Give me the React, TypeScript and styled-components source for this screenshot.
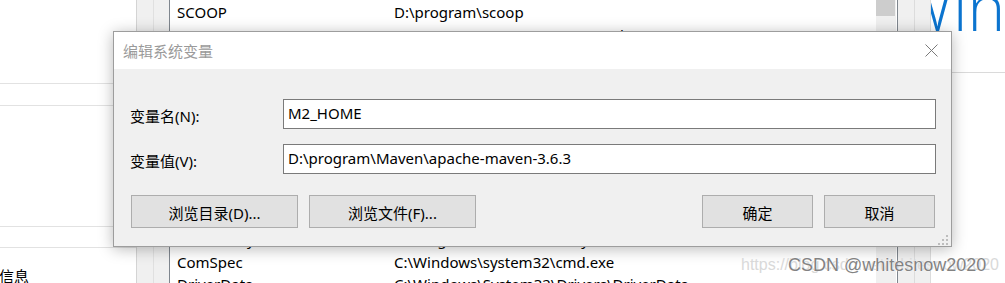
import React from "react";
import styled, { createGlobalStyle } from "styled-components";

const UI_FONT = `"Noto Sans", "Noto Sans CJK SC", sans-serif`;

const Global = createGlobalStyle`
  html, body { margin: 0; padding: 0; background: #fff; }
  body { font-family: ${UI_FONT}; }
  * { box-sizing: border-box; }
`;

const Screen = styled.div`
  position: relative;
  width: 1005px;
  height: 283px;
  overflow: hidden;
  background: #fff;
  display: flex;
  font-family: ${UI_FONT};
  color: #000;
`;

/* ---------- background: left navigation pane ---------- */
const LeftPane = styled.div`
  width: 136px;
  flex: none;
  display: flex;
  flex-direction: column;
  background: #fff;
`;

const NavBlock = styled.div<{ $h: number }>`
  height: ${(p) => p.$h + 1}px;
  flex: none;
  border-bottom: 1px solid #e2e2e2;
`;

const NavText = styled.div`
  padding-top: 18px;
  font-size: 15px;
  line-height: 20px;
  font-family: "Noto Sans CJK SC", sans-serif;
  margin-left: -1px;
`;

/* ---------- background: env-var window frame ---------- */
const Rail = styled.div<{ $w: number; $line: string }>`
  width: ${(p) => p.$w}px;
  flex: none;
  background: #f0f0f0;
  border-left: 1px solid ${(p) => p.$line};
`;

const ListBox = styled.div`
  width: 729px;
  flex: none;
  display: flex;
  border-left: 1px solid #7f868e;
  border-right: 1px solid #7f868e;
  background: #fff;
  padding-right: 1px;
`;

const Rows = styled.div`
  flex: 1;
  padding-top: 1px;
  display: flex;
  flex-direction: column;
`;

const Row = styled.div`
  height: 22.7px;
  flex: none;
  display: flex;
  align-items: center;
  font-size: 15px;
  line-height: 22.7px;
  white-space: nowrap;
`;

const NameCell = styled.span`
  width: 224px;
  flex: none;
  padding-left: 7px;
`;

const ValueCell = styled.span`
  flex: 1;
`;

const Scrollbar = styled.div`
  width: 20px;
  flex: none;
  background: #f0f0f0;
  display: flex;
  flex-direction: column;
`;

const Thumb = styled.div`
  height: 16px;
  background: #cdcdcd;
  margin-right: 1px;
`;

/* ---------- background: right pane ---------- */
const RightPane = styled.div`
  flex: 1;
  border-left: 1px solid #dcdcdc;
  background: #fff;
  overflow: hidden;
`;

const Hero = styled.div`
  height: 73px;
  border-bottom: 1px solid #dadada;
  overflow: hidden;
`;

const HeroText = styled.div`
  font-family: "Open Sans", "Noto Sans", sans-serif;
  font-weight: 300;
  font-size: 64px;
  line-height: 64px;
  color: #0b74cf;
  margin-top: -25px;
  text-indent: -35px;
  white-space: nowrap;
`;

/* ---------- dialog ---------- */
const Dialog = styled.div`
  position: absolute;
  left: 113px;
  top: 31px;
  width: 839px;
  height: 216px;
  border: 1px solid #9d9d9d;
  background: #f0f0f0;
  box-shadow: 0 2px 14px rgba(0, 0, 0, 0.28);
  display: flex;
  flex-direction: column;
  font-family: "Noto Sans", "Noto Sans CJK SC", sans-serif;
`;

const TitleBar = styled.div`
  height: 37px;
  flex: none;
  background: #fff;
  display: flex;
  align-items: center;
  justify-content: space-between;
  padding: 0 13px 0 9px;
`;

const Title = styled.span`
  font-family: "Noto Sans CJK SC", sans-serif;
  font-size: 15px;
  color: #9a9a9a;
`;

const CloseBtn = styled.svg`
  display: block;
`;

const Body = styled.div`
  flex: 1;
  padding: 30px 15px 0 16px;
  display: flex;
  flex-direction: column;
`;

const Field = styled.div<{ $mb: number }>`
  display: flex;
  align-items: center;
  height: 30px;
  margin-bottom: ${(p) => p.$mb}px;
`;

const Label = styled.span`
  width: 153px;
  flex: none;
  font-size: 15px;
  padding-top: 2px;
`;

const Input = styled.div`
  flex: 1;
  height: 30px;
  border: 1px solid #7a7a7a;
  background: #fff;
  font-size: 15px;
  line-height: 27px;
  padding-left: 4px;
  white-space: nowrap;
`;

const ButtonRow = styled.div`
  display: flex;
  justify-content: space-between;
  padding: 0 1px;
`;

const ButtonGroup = styled.div`
  display: flex;
  gap: 11px;
`;

const Button = styled.div<{ $w: number }>`
  width: ${(p) => p.$w}px;
  height: 33px;
  border: 1px solid #adadad;
  background: #e1e1e1;
  font-size: 15px;
  display: flex;
  align-items: center;
  justify-content: center;
  padding-top: 1px;
`;

const Grip = styled.svg`
  position: absolute;
  right: 2px;
  bottom: 0px;
`;

/* ---------- watermark ---------- */
const Watermark = styled.div`
  position: absolute;
  left: 741px;
  top: 255px;
  font-family: "Liberation Sans", Arial, sans-serif;
  white-space: nowrap;
`;

const WatermarkUrl = styled.div`
  font-size: 16px;
  line-height: 20px;
  color: #d9d9d9;
`;

const WatermarkTag = styled.div`
  position: absolute;
  left: 47px;
  top: -1px;
  font-size: 18px;
  line-height: 22px;
  color: #828282;
  text-shadow: 0 0 1px #fff, 0 0 1px #fff;
`;

const rows: [string, string][] = [
  ["SCOOP", "D:\\program\\scoop"],
  ["TEMP", "%USERPROFILE%\\AppData\\Local\\Temp"],
  ["TMP", "%USERPROFILE%\\AppData\\Local\\Temp"],
  ["", ""],
  ["", ""],
  ["", ""],
  ["", ""],
  ["", ""],
  ["", ""],
  ["", ""],
  ["ChocolateyInstall", "C:\\ProgramData\\chocolatey"],
  ["ComSpec", "C:\\Windows\\system32\\cmd.exe"],
  ["DriverData", "C:\\Windows\\System32\\Drivers\\DriverData"],
];

export default function App() {
  return (
    <>
      <Global />
      <Screen>
        <LeftPane>
          <NavBlock $h={83} />
          <NavBlock $h={21} />
          <NavBlock $h={120} />
          <NavBlock $h={20} />
          <NavText>信息</NavText>
        </LeftPane>
        <Rail $w={17} $line="#d4d4d4" />
        <Rail $w={16} $line="#e0e0e0" />
        <ListBox>
          <Rows>
            {rows.map(([n, v], i) => (
              <Row key={i}>
                <NameCell>{n}</NameCell>
                <ValueCell>{v}</ValueCell>
              </Row>
            ))}
          </Rows>
          <Scrollbar>
            <Thumb />
          </Scrollbar>
        </ListBox>
        <Rail $w={16} $line="#f0f0f0" />
        <Rail $w={16} $line="#dcdcdc" />
        <RightPane>
          <Hero>
            <HeroText>Windows</HeroText>
          </Hero>
        </RightPane>

        <Dialog>
          <TitleBar>
            <Title>编辑系统变量</Title>
            <CloseBtn width="13" height="13" viewBox="0 0 13 13">
              <path d="M0.5 0.5 L12.5 12.5 M12.5 0.5 L0.5 12.5" stroke="#7a7a7a" strokeWidth="1" fill="none" />
            </CloseBtn>
          </TitleBar>
          <Body>
            <Field $mb={15}>
              <Label>变量名(N):</Label>
              <Input>M2_HOME</Input>
            </Field>
            <Field $mb={21}>
              <Label>变量值(V):</Label>
              <Input>D:\program\Maven\apache-maven-3.6.3</Input>
            </Field>
            <ButtonRow>
              <ButtonGroup>
                <Button $w={167}>浏览目录(D)...</Button>
                <Button $w={167}>浏览文件(F)...</Button>
              </ButtonGroup>
              <ButtonGroup>
                <Button $w={111}>确定</Button>
                <Button $w={111}>取消</Button>
              </ButtonGroup>
            </ButtonRow>
          </Body>
          <Grip width="11" height="11" viewBox="0 0 11 11">
            <g fill="#bdbdbd">
              <rect x="8" y="0" width="2" height="2" />
              <rect x="4" y="4" width="2" height="2" />
              <rect x="8" y="4" width="2" height="2" />
              <rect x="0" y="8" width="2" height="2" />
              <rect x="4" y="8" width="2" height="2" />
              <rect x="8" y="8" width="2" height="2" />
            </g>
          </Grip>
        </Dialog>

        <Watermark>
          <WatermarkUrl>https://blog.csdn.net/whitesnow2020</WatermarkUrl>
          <WatermarkTag>CSDN @whitesnow2020</WatermarkTag>
        </Watermark>
      </Screen>
    </>
  );
}
